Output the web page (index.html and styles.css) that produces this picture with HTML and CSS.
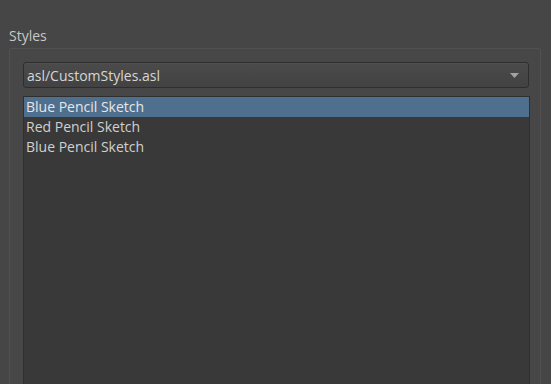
FILE: index.html
```html
<!DOCTYPE html>
<html>
<head>
<meta charset="utf-8">
<link rel="stylesheet" href="styles.css">
</head>
<body>
<div class="panel">
  <div class="title">Styles</div>
  <div class="group">
    <div class="combo">
      <span class="combo-text">asl/CustomStyles.asl</span>
      <svg class="arrow" width="9" height="5" viewBox="0 0 9 5"><polygon points="0,0 9,0 4.5,5" fill="#a3a3a3"/></svg>
    </div>
    <div class="list">
      <div class="row selected">Blue Pencil Sketch</div>
      <div class="row">Red Pencil Sketch</div>
      <div class="row">Blue Pencil Sketch</div>
    </div>
  </div>
</div>
</body>
</html>
```
FILE: styles.css
```css
html, body {
  margin: 0;
  padding: 0;
  height: 100%;
  overflow: hidden;
  background: #464646;
}
.panel {
  font-family: "Open Sans", "Noto Sans", sans-serif;
  font-size: 14px;
  color: #d2d2d2;
  height: 100%;
  box-sizing: border-box;
  padding-top: 26px;
  padding-left: 9px;
  display: flex;
  flex-direction: column;
}
.title {
  height: 22px;
  line-height: 20px;
  color: #c8c8c8;
}
.group {
  flex: 1;
  width: 532px;
  border: 1px solid #515151;
  border-bottom: none;
  border-radius: 3px 3px 0 0;
  background: #474747;
  padding: 13px 13px 0 13px;
  box-sizing: border-box;
  display: flex;
  flex-direction: column;
}
.combo {
  height: 26px;
  flex: none;
  width: 506px;
  box-sizing: border-box;
  border: 1px solid #2e2e2e;
  border-radius: 3px;
  background: linear-gradient(#4b4b4b, #424242);
  box-shadow: inset 0 1px 0 #505050;
  display: flex;
  align-items: center;
  justify-content: space-between;
  padding: 0 9px 0 3px;
}
.combo-text {
  color: #d6d6d6;
}
.arrow {
  display: block;
}
.list {
  flex: 1;
  margin-top: 8px;
  width: 507px;
  box-sizing: border-box;
  border: 1px solid #2f2f2f;
  border-bottom: none;
  background: #393939;
}
.row {
  height: 20px;
  line-height: 20px;
  padding-left: 2px;
  color: #d0d0d0;
}
.row.selected {
  background: #4f6f8f;
  color: #e6e6e6;
}
```
